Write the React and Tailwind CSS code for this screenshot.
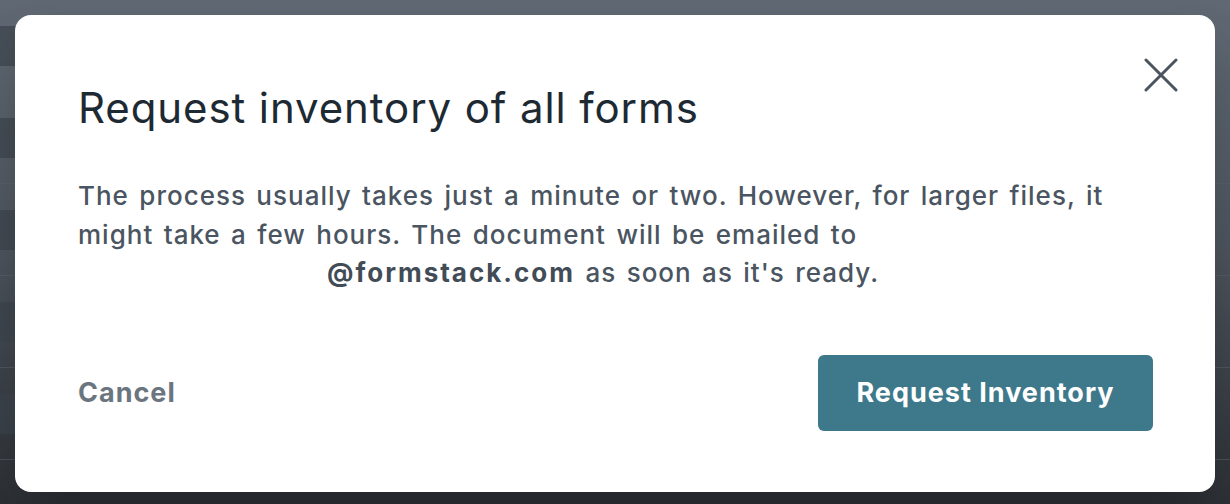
const rows = [0, 1, 2, 3, 4];

// Faded page content sitting behind the dialog overlay
const Backdrop = () => (
  <div className="absolute inset-0 flex flex-col bg-gradient-to-b from-[#606973] via-[#4c535c] to-[#2c3035]">
    {rows.map((r) => (
      <div key={r} className="h-[92px] flex items-center justify-between border-b border-[#58606a]/60">
        <div className="h-[40px] w-[60px] bg-[#3c434b]/70 flex items-center justify-end pr-1 text-[26px] font-semibold text-[#5a626c]">
          al
        </div>
        <div className="w-[40px] text-[30px] text-[#4a6276]/70">{['m', 'u', 'w', 's', '<'][r]}</div>
      </div>
    ))}
  </div>
);

const CloseIcon = () => (
  <svg width="34" height="34" viewBox="0 0 34 34" fill="none" stroke="currentColor" strokeWidth="3" strokeLinecap="round">
    <path d="M2 2 L32 32 M32 2 L2 32" />
  </svg>
);

const App = () => {
  return (
    <div
      className="relative w-[1230px] h-[504px] overflow-hidden"
      style={{ fontFamily: 'Inter, "Open Sans", sans-serif' }}
    >
      <Backdrop />

      <div className="relative flex justify-center pt-[15px]">
        <div className="relative w-[1200px] h-[477px] rounded-[16px] bg-white shadow-2xl pl-[63px] pr-[40px] pt-[67px] flex flex-col">
          <button className="absolute right-[37px] top-[43px] text-[#4b5560]">
            <CloseIcon />
          </button>

          <h2 className="text-[42px] leading-[52px] font-normal text-[#1e2a33] tracking-[0.9px]">
            Request inventory of all forms
          </h2>

          <p className="mt-[43px] text-[26px] leading-[38.5px] font-medium text-[#4a5561] tracking-[1px] [word-spacing:2.5px] whitespace-nowrap">
            The process usually takes just a minute or two. However, for larger files, it
            <br />
            might take a few hours. The document will be emailed to
            <br />
            <span className="inline-block w-[249px]"></span>
            <span className="font-bold text-[#414c57] tracking-[2px]">@formstack.com</span> as soon as it's ready.
          </p>

          <div className="mt-auto mb-[61px] pr-[22px] flex items-center justify-between">
            <button className="text-[27px] font-bold text-[#6b7580] tracking-[1px]">Cancel</button>
            <button className="w-[335px] h-[76px] rounded-[6px] bg-[#3e798b] text-white text-[27px] font-bold tracking-[1px]">
              Request Inventory
            </button>
          </div>
        </div>
      </div>
    </div>
  );
};

export default App;
